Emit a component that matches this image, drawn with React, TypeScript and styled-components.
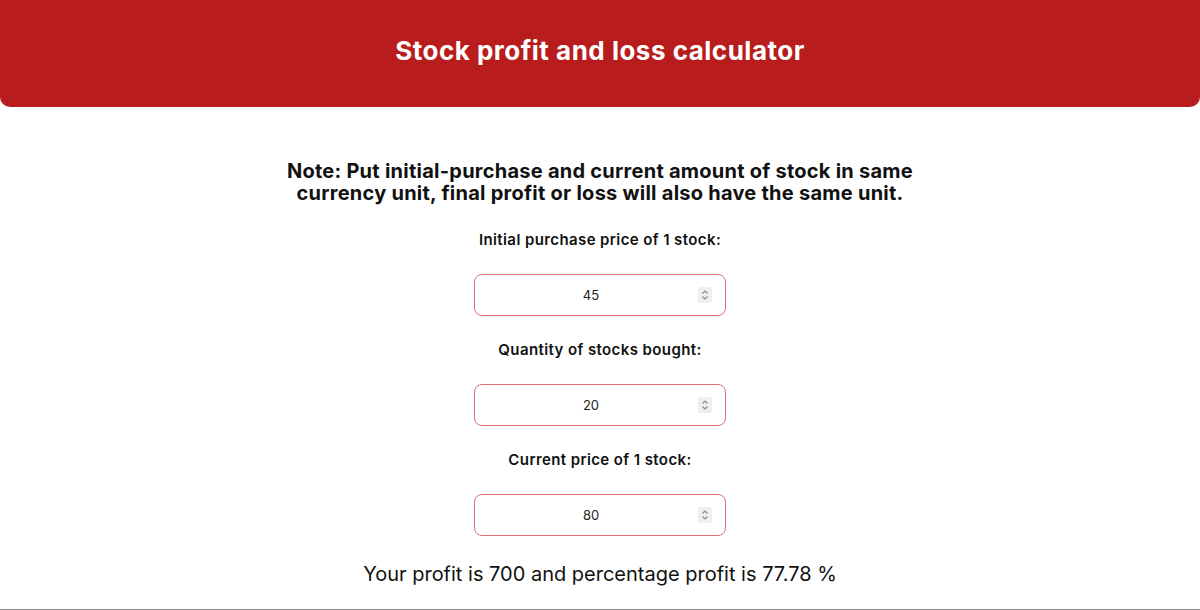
import React, { useState } from "react"
import styled, { createGlobalStyle } from "styled-components"

const GlobalStyle = createGlobalStyle`
  * { box-sizing: border-box; }
  body {
    margin: 0;
    background: #ffffff;
    font-family: "Inter", "Liberation Sans", sans-serif;
    color: #111111;
  }
`

const Header = styled.header`
  height: 107px;
  background: #b91c1c;
  border-radius: 0 0 10px 10px;
  display: flex;
  justify-content: center;
  padding-top: 34px;
`

const Title = styled.h1`
  margin: 0;
  color: #ffffff;
  font-size: 26px;
  font-weight: 700;
  letter-spacing: 0.5px;
  line-height: 34px;
`

const Main = styled.main`
  display: flex;
  flex-direction: column;
  align-items: center;
  padding-top: 53px;
  height: 502px;
`

const Note = styled.p`
  margin: 0 0 26px;
  width: 680px;
  text-align: center;
  font-size: 20px;
  font-weight: 700;
  letter-spacing: 0.25px;
  line-height: 22px;
`

const Label = styled.label`
  font-size: 15px;
  font-weight: 600;
  letter-spacing: 0.4px;
  line-height: 20px;
  margin-bottom: 24px;
`

const Field = styled.div`
  position: relative;
  width: 252px;
  height: 42px;
  margin-bottom: 24px;
`

const Input = styled.input`
  width: 100%;
  height: 100%;
  border: 1px solid #e07070;
  border-radius: 8px;
  text-align: center;
  font-family: inherit;
  font-size: 13px;
  color: #222;
  outline: none;
  padding: 0 30px 0 12px;
  appearance: textfield;
  -moz-appearance: textfield;
  &::-webkit-inner-spin-button,
  &::-webkit-outer-spin-button {
    -webkit-appearance: none;
    margin: 0;
  }
`

const Spin = styled.span`
  position: absolute;
  right: 14px;
  top: 13px;
  width: 14px;
  height: 16px;
  background: #efefef;
  border-radius: 2px;
  display: flex;
  align-items: center;
  justify-content: center;
  pointer-events: none;
`

const Result = styled.div`
  margin-top: 2px;
  font-size: 20px;
  font-weight: 400;
  color: #111;
`

const Footer = styled.footer`
  border-top: 2px solid #8a8a8a;
  height: 20px;
`

const fields = [
  { id: "initial", label: "Initial purchase price of 1 stock:", value: "45" },
  { id: "qty", label: "Quantity of stocks bought:", value: "20" },
  { id: "current", label: "Current price of 1 stock:", value: "80" },
]

const SpinIcon = () => (
  <svg width="8" height="12" viewBox="0 0 8 12" fill="none" stroke="#8a8a8a" strokeWidth="1.2">
    <path d="M1.5 4.5 L4 2 L6.5 4.5" />
    <path d="M1.5 7.5 L4 10 L6.5 7.5" />
  </svg>
)

export default function App() {
  const [values, setValues] = useState(fields.map((f) => f.value))
  return (
    <>
      <GlobalStyle />
      <Header>
        <Title>Stock profit and loss calculator</Title>
      </Header>
      <Main>
        <Note>
          Note: Put initial-purchase and current amount of stock in same
          <br />
          currency unit, final profit or loss will also have the same unit.
        </Note>
        {fields.map((f, i) => (
          <React.Fragment key={f.id}>
            <Label htmlFor={f.id}>{f.label}</Label>
            <Field>
              <Input
                id={f.id}
                type="number"
                value={values[i]}
                onChange={(e) => setValues(values.map((v, j) => (j === i ? e.target.value : v)))}
              />
              <Spin>
                <SpinIcon />
              </Spin>
            </Field>
          </React.Fragment>
        ))}
        <Result>Your profit is 700 and percentage profit is 77.78 %</Result>
      </Main>
      <Footer />
    </>
  )
}
